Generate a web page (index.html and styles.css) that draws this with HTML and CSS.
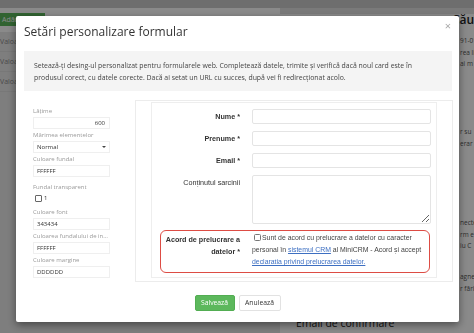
FILE: index.html
```html
<!DOCTYPE html>
<html lang="ro">
<head>
<meta charset="utf-8">
<title>Setări personalizare formular</title>
<link rel="stylesheet" href="styles.css">
</head>
<body>
<div class="page">
  <div class="topbar"></div>
  <div class="main">
    <div class="left">
      <div class="toolbar"><span class="btn-add">Adăugare</span></div>
      <div class="list-row">Valoare</div>
      <div class="list-row">Valoare</div>
      <div class="list-row">Valoare</div>
    </div>
    <div class="right">
      <div class="r-band"></div>
      <div class="r-panel">
        <div class="r-head">Căutu</div>
        <div class="r-group g1">
          <div class="r-line">91-01</div>
          <div class="r-line">rea li</div>
          <div class="r-line">ai m</div>
        </div>
        <div class="r-group g2">
          <div class="r-line">r su</div>
          <div class="r-line">erar</div>
        </div>
        <div class="r-group g3">
          <div class="r-line">necte</div>
          <div class="r-line">rm e</div>
          <div class="r-line">iu C</div>
        </div>
        <div class="r-group g4">
          <div class="r-line">agne</div>
          <div class="r-line">r fări</div>
        </div>
        <div class="r-title">Email de confirmare</div>
      </div>
    </div>
  </div>
</div>

<div class="overlay">
  <div class="modal">
    <div class="m-header">
      <h1 class="m-title">Setări personalizare formular</h1>
      <span class="m-close">×</span>
    </div>
    <div class="m-info">Setează-ți desing-ul personalizat pentru formularele web. Completează datele, trimite și verifică dacă noul card este în<br>produsul corect, cu datele corecte. Dacă ai setat un URL cu succes, după vei fi redirecționat acolo.</div>
    <div class="m-body">
      <div class="settings">
        <div class="field">
          <div class="f-label">Lățime</div>
          <div class="f-input f-right">600</div>
        </div>
        <div class="field">
          <div class="f-label">Mărimea elementelor</div>
          <div class="f-input f-select"><span>Normal</span><span class="caret"></span></div>
        </div>
        <div class="field">
          <div class="f-label">Culoare fundal</div>
          <div class="f-input">FFFFFF</div>
        </div>
        <div class="field f-transparent">
          <div class="f-label">Fundal transparent</div>
          <div class="f-check"><span class="cbox"></span><span>1</span></div>
        </div>
        <div class="field">
          <div class="f-label">Culoare font</div>
          <div class="f-input">343434</div>
        </div>
        <div class="field">
          <div class="f-label">Culoarea fundalului de interacțiune</div>
          <div class="f-input">FFFFFF</div>
        </div>
        <div class="field">
          <div class="f-label">Culoare margine</div>
          <div class="f-input">DDDDDD</div>
        </div>
      </div>
      <div class="preview">
        <div class="form">
          <div class="row">
            <div class="r-label b">Nume *</div>
            <div class="r-input"></div>
          </div>
          <div class="row">
            <div class="r-label b">Prenume *</div>
            <div class="r-input"></div>
          </div>
          <div class="row">
            <div class="r-label b">Email *</div>
            <div class="r-input"></div>
          </div>
          <div class="row row-ta">
            <div class="r-label">Conținutul sarcinii</div>
            <textarea class="r-ta"></textarea>
          </div>
          <div class="consent">
            <div class="c-label">Acord de prelucrare a datelor *</div>
            <div class="c-text"><span class="c-box"></span>Sunt de acord cu prelucrare a datelor cu caracter personal în <a href="#">sistemul CRM</a> al MiniCRM - Acord și accept <a href="#">declarația privind prelucrarea datelor.</a></div>
          </div>
        </div>
      </div>
    </div>
    <div class="m-footer">
      <button class="btn btn-save">Salvează</button>
      <button class="btn btn-cancel">Anulează</button>
    </div>
  </div>
</div>
</body>
</html>
```
FILE: styles.css
```css
html, body {
  margin: 0;
  padding: 0;
}
body {
  width: 474px;
  height: 333px;
  overflow: hidden;
  font-family: "Open Sans", "Liberation Sans", sans-serif;
  background: #ffffff;
  color: #333;
}

/* ---------- underlying page ---------- */
.page {
  height: 333px;
  display: flex;
  flex-direction: column;
}
.topbar {
  height: 8px;
  background: #cccccc;
}
.main {
  flex: 1;
  display: grid;
  grid-template-columns: 280px 1fr;
}
.left {
  background: #e9e9e9;
}
.toolbar {
  height: 24px;
  background: #ffffff;
  padding-top: 5px;
  box-sizing: border-box;
}
.btn-add {
  display: block;
  width: 45px;
  height: 13px;
  background: #5cb85c;
  color: #fff;
  font-size: 7px;
  line-height: 13px;
  padding-left: 2px;
  box-sizing: border-box;
}
.list-row {
  height: 19px;
  line-height: 19px;
  font-size: 7px;
  color: #8a8a8a;
  border-bottom: 1px solid #dedede;
  padding-left: 0;
}
.list-row:first-child {
  margin-top: 2px;
}
.right {
  display: flex;
  flex-direction: column;
}
.r-band {
  height: 6px;
  background: #e2e2e2;
}
.r-panel {
  flex: 1;
  background: #ffffff;
}
.r-head {
  padding-left: 172px;
  font-size: 12px;
  line-height: 12px;
  font-weight: 600;
  color: #222;
}
.r-group {
  padding-left: 180px;
  font-size: 6.5px;
  line-height: 11.5px;
  color: #555;
}
.g1 { margin-top: 9px; }
.g2 { margin-top: 56.5px; }
.g3 { margin-top: 68px; }
.g4 { margin-top: 19.5px; }
.r-title {
  margin-top: 22.75px;
  padding-left: 16px;
  font-size: 10.5px;
  line-height: 12px;
  color: #222;
}

/* ---------- overlay and modal ---------- */
.overlay {
  position: fixed;
  inset: 0;
  background: rgba(0, 0, 0, 0.46);
}
.modal {
  position: absolute;
  left: 16px;
  top: 16px;
  width: 443px;
  background: #ffffff;
  border-radius: 2px;
  box-shadow: 0 3px 8px rgba(0, 0, 0, 0.45);
  padding-bottom: 11px;
}
.m-header {
  display: flex;
  justify-content: space-between;
  align-items: flex-start;
  padding: 9px 8px 12px 8px;
}
.m-title {
  margin: 0;
  font-size: 12px;
  line-height: 14px;
  font-weight: 400;
  color: #333;
}
.m-close {
  font-size: 11px;
  line-height: 10px;
  margin-top: -4px;
  color: #a8a8a8;
}
.m-info {
  margin: 0 7px 0 8px;
  background: #f4f4f4;
  padding: 9px 10px 8px 10px;
  font-size: 6.9px;
  line-height: 11.6px;
  color: #444;
  white-space: nowrap;
}
.m-body {
  display: flex;
  align-items: flex-start;
  margin-top: 9px;
  padding-left: 17px;
}

/* settings column */
.settings {
  width: 77px;
  padding-top: 6.5px;
}
.field {
  margin-bottom: 2px;
}
.f-label {
  font-size: 6px;
  line-height: 9px;
  color: #9a9a9a;
  margin-bottom: 1px;
  white-space: nowrap;
  overflow: hidden;
  text-overflow: ellipsis;
}
.f-input {
  height: 12px;
  box-sizing: border-box;
  border: 1px solid #efefef;
  font-size: 6px;
  line-height: 10px;
  padding: 0 3px;
  color: #333;
}
.f-right {
  text-align: right;
  padding-right: 4px;
}
.f-select {
  display: flex;
  justify-content: space-between;
  align-items: center;
}
.caret {
  width: 0;
  height: 0;
  border-left: 2px solid transparent;
  border-right: 2px solid transparent;
  border-top: 2.5px solid #444;
  margin-right: 0;
}
.f-transparent {
  margin-top: 6px;
  margin-bottom: 4px;
}
.f-check {
  height: 11px;
  display: flex;
  align-items: center;
  gap: 2px;
  padding-left: 2px;
  font-size: 6px;
  color: #333;
}
.cbox {
  width: 7px;
  height: 7px;
  box-sizing: border-box;
  border: 1px solid #666;
  border-radius: 1px;
}

/* preview */
.preview {
  margin-left: 25px;
  width: 318px;
  box-sizing: border-box;
  border: 1px solid #ececec;
  padding: 1px 15px 3px 15px;
}
.form {
  border: 1px solid #eeeeee;
  padding: 6px 5px 4px 0;
  font-family: "Liberation Sans", Arial, sans-serif;
  font-size: 7.2px;
  color: #333;
}
.row {
  display: flex;
  align-items: flex-start;
  margin-bottom: 7px;
}
.row-ta {
  margin-bottom: 6px;
}
.r-label {
  width: 100px;
  box-sizing: border-box;
  padding-right: 12px;
  text-align: right;
  line-height: 15px;
  flex-shrink: 0;
}
.b {
  font-weight: 700;
}
.r-input {
  width: 179px;
  height: 15px;
  box-sizing: border-box;
  border: 1px solid #e4e4e4;
  border-radius: 2px;
}
.r-ta {
  display: block;
  width: 179px;
  height: 49px;
  box-sizing: border-box;
  border: 1px solid #e4e4e4;
  border-radius: 2px;
  margin: 0;
  padding: 0;
  resize: vertical;
  background: #fff;
}
.consent {
  display: flex;
  align-items: flex-start;
  margin: 0 1px 0 8px;
  border: 1px solid #dd4c44;
  border-radius: 6px;
  padding: 1px 4px 4px 0;
}
.c-label {
  width: 91px;
  flex-shrink: 0;
  box-sizing: border-box;
  padding: 2px 12px 0 0;
  text-align: right;
  font-weight: 700;
  line-height: 12px;
}
.c-text {
  flex: 1;
  font-size: 6.9px;
  line-height: 12px;
  color: #444;
}
.c-text a {
  color: #3d6fc2;
  text-decoration: underline;
}
.c-box {
  display: inline-block;
  width: 7px;
  height: 7px;
  box-sizing: border-box;
  border: 1px solid #777;
  border-radius: 1.5px;
  margin: 0 1px 0 2px;
  vertical-align: -0.5px;
}

/* footer */
.m-footer {
  display: flex;
  justify-content: center;
  gap: 4px;
  margin-top: 13px;
}
.btn {
  height: 16px;
  box-sizing: border-box;
  margin: 0;
  padding: 0;
  font-family: "Open Sans", "Liberation Sans", sans-serif;
  font-size: 6.8px;
  line-height: 14px;
  border-radius: 2px;
}
.btn-save {
  width: 40px;
  background: #5cb85c;
  border: 1px solid #52ad52;
  color: #ffffff;
}
.btn-cancel {
  width: 42px;
  background: #ffffff;
  border: 1px solid #e2e2e2;
  color: #333;
}
```
